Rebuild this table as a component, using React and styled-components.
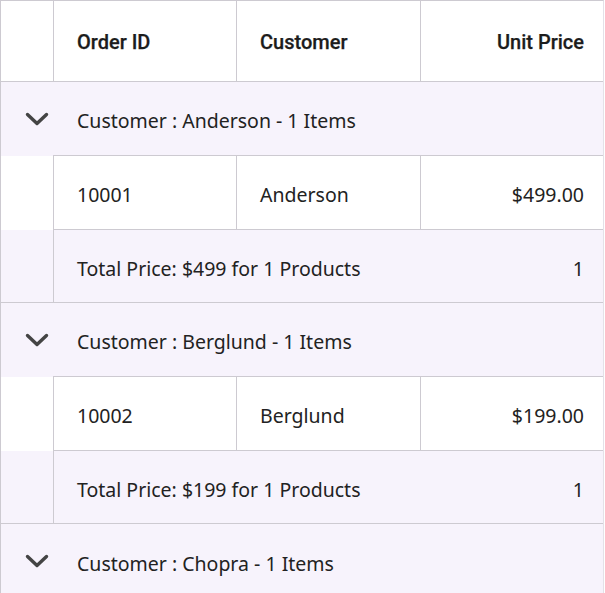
import React from 'react'
import styled, { createGlobalStyle } from 'styled-components'

const GlobalStyle = createGlobalStyle`
  *, *::before, *::after { box-sizing: border-box; }
  body {
    margin: 0;
    background: #fff;
    font-family: "Noto Sans", "Open Sans", sans-serif;
  }
`

const lavender = '#f7f3fc'
const line = '#cdcad1'

const Grid = styled.div`
  width: 604px;
  height: 593px;
  overflow: hidden;
  border-top: 1px solid ${line};
  border-left: 1px solid ${line};
  border-right: 1px solid #e4e1e8;
`

const Row = styled.div`
  display: grid;
  grid-template-columns: 52px 183px 184px 1fr;
  height: ${p => p.h}px;
  border-bottom: ${p => p.fullLine ? `1px solid ${line}` : 'none'};
  background: ${p => p.tint ? lavender : '#fff'};
`

const Indent = styled.div`
  background: ${p => p.tint ? lavender : '#fff'};
`

const HeadCell = styled.div`
  display: flex;
  align-items: center;
  justify-content: ${p => p.right ? 'flex-end' : 'flex-start'};
  padding: 2px 19px 0 23px;
  border-left: 1px solid ${line};
  font-family: Roboto, sans-serif;
  font-weight: 500;
  font-size: 20px;
  color: #1c1c1c;
  -webkit-text-stroke: 0.25px #1c1c1c;
`

const Cell = styled.div`
  display: flex;
  align-items: center;
  justify-content: ${p => p.right ? 'flex-end' : 'flex-start'};
  padding: 4px 19px 0 23px;
  border-left: ${p => p.noLeft ? 'none' : `1px solid ${line}`};
  border-bottom: ${p => p.bottom ? `1px solid ${line}` : 'none'};
  background: ${p => p.tint ? lavender : '#fff'};
  font-size: 19.5px;
  color: #222;
  grid-column: ${p => p.span || 'auto'};
  white-space: nowrap;
`

const CaptionRow = styled.div`
  display: grid;
  grid-template-columns: 52px 1fr;
  height: 74px;
  background: ${lavender};
`

const Toggle = styled.div`
  display: flex;
  align-items: center;
  padding: 0 0 0 24px;
`

const Caption = styled.div`
  display: flex;
  align-items: center;
  padding: 4px 0 0 24px;
  font-size: 19.5px;
  color: #222;
  border-bottom: ${p => p.bottom ? `1px solid ${line}` : 'none'};
  white-space: nowrap;
`

const Chevron = () => (
  <svg width="24" height="16" viewBox="0 0 24 16">
    <path d="M2.5 3.5 L12 12.5 L21.5 3.5" fill="none" stroke="#444" strokeWidth="3.4" strokeLinecap="round" strokeLinejoin="round" />
  </svg>
)

const groups = [
  { name: 'Anderson', id: '10001', price: '$499.00', total: '$499', open: true },
  { name: 'Berglund', id: '10002', price: '$199.00', total: '$199', open: true },
  { name: 'Chopra', id: '10003', price: '$299.00', total: '$299', open: false },
]

export default function App() {
  return (
    <>
      <GlobalStyle />
      <Grid>
        <Row h={81} fullLine>
          <Indent />
          <HeadCell>Order ID</HeadCell>
          <HeadCell>Customer</HeadCell>
          <HeadCell right>Unit Price</HeadCell>
        </Row>
        {groups.map(g => (
          <React.Fragment key={g.id}>
            <CaptionRow>
              <Toggle><Chevron /></Toggle>
              <Caption bottom={g.open}>Customer : {g.name} - 1 Items</Caption>
            </CaptionRow>
            {g.open && (
              <>
                <Row h={74}>
                  <Indent />
                  <Cell bottom>{g.id}</Cell>
                  <Cell bottom>{g.name}</Cell>
                  <Cell bottom right>{g.price}</Cell>
                </Row>
                <Row h={73} tint fullLine>
                  <Indent tint />
                  <Cell tint span="2 / 4">Total Price: {g.total} for 1 Products</Cell>
                  <Cell tint noLeft right>1</Cell>
                </Row>
              </>
            )}
          </React.Fragment>
        ))}
      </Grid>
    </>
  )
}
